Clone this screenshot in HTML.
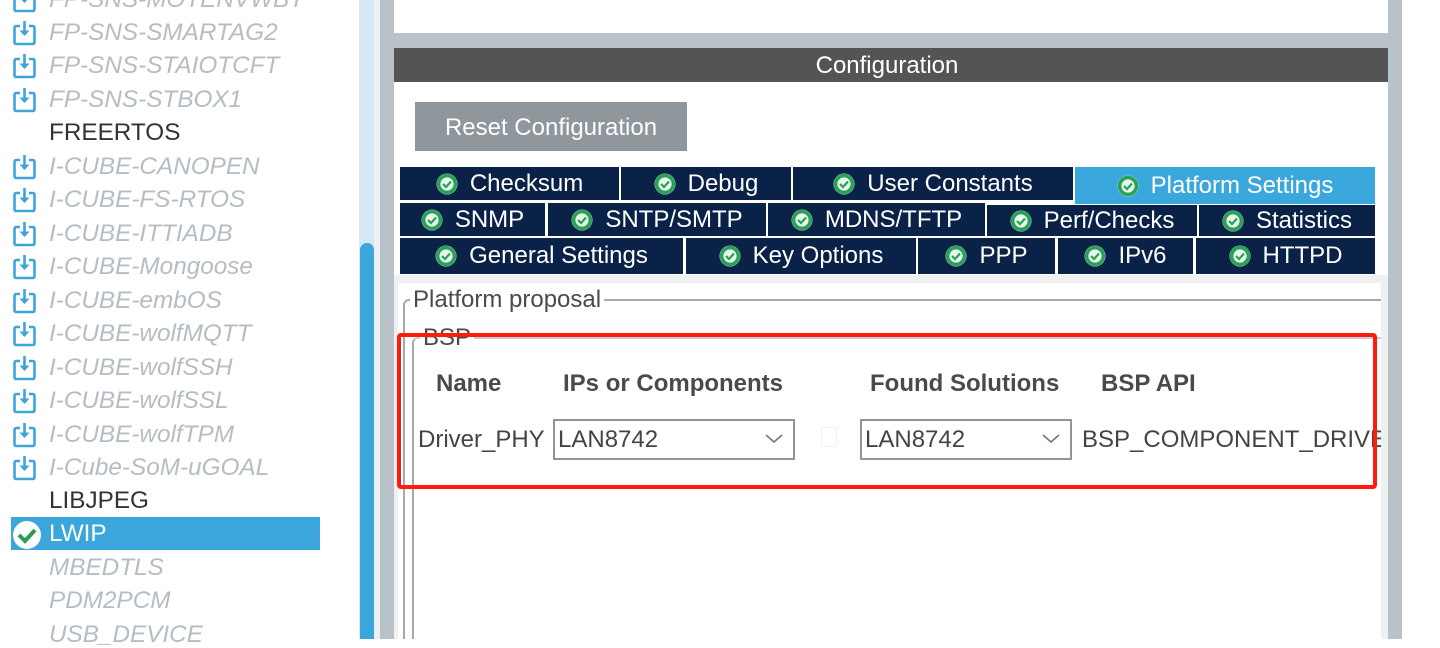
<!DOCTYPE html>
<html><head><meta charset="utf-8"><style>
*{margin:0;padding:0;box-sizing:border-box}
body{width:1440px;height:639px;overflow:hidden;background:#fff;position:relative;font-family:"Liberation Sans",Arial,sans-serif}
.a{position:absolute}
.it{position:absolute;left:49px;font-size:24.3px;font-style:italic;color:#b5bdc4;line-height:26px;white-space:nowrap}
.it.n{font-style:normal;color:#333}
.ic{position:absolute;left:12px;width:25px;height:26px}
.tab{position:absolute;background:#0b2248;color:#fff;font-size:24px;display:flex;align-items:center;justify-content:center;white-space:nowrap}
.tab svg{margin-right:12px;flex:none}
.sel{background:#3aa8dc}
.h{position:absolute;top:370px;font-size:24px;font-weight:bold;color:#4a4a4a;white-space:nowrap}
</style></head><body>
<svg width="0" height="0" style="position:absolute"><defs>
<symbol id="dl" viewBox="0 0 25 26"><path d="M8 6H4.5Q2.5 6 2.5 8V22Q2.5 24 4.5 24H20.5Q22.5 24 22.5 22V8Q22.5 6 20.5 6H17" fill="none" stroke="#3fa4dc" stroke-width="2.6"/><path d="M12.5 1V15" stroke="#3fa4dc" stroke-width="2.6"/><path d="M7.5 10.5L12.5 16L17.5 10.5Z" fill="#3fa4dc"/></symbol>
<symbol id="ck" viewBox="0 0 22 22"><circle cx="11" cy="11" r="10.5" fill="#e8f6ec"/><circle cx="11" cy="11" r="8.4" fill="none" stroke="#27a257" stroke-width="3.6"/><path d="M7 11l3 3 5-5.5" fill="none" stroke="#27a257" stroke-width="2.2"/></symbol>
</defs></svg>

<svg class="ic" style="top:-13px"><use href="#dl"/></svg><div class="it" style="top:-13px">FP-SNS-MOTENVWBT</div>
<svg class="ic" style="top:20px"><use href="#dl"/></svg><div class="it" style="top:20px">FP-SNS-SMARTAG2</div>
<svg class="ic" style="top:53px"><use href="#dl"/></svg><div class="it" style="top:53px">FP-SNS-STAIOTCFT</div>
<svg class="ic" style="top:87px"><use href="#dl"/></svg><div class="it" style="top:87px">FP-SNS-STBOX1</div>
<div class="it n" style="top:120px">FREERTOS</div>
<svg class="ic" style="top:154px"><use href="#dl"/></svg><div class="it" style="top:154px">I-CUBE-CANOPEN</div>
<svg class="ic" style="top:187px"><use href="#dl"/></svg><div class="it" style="top:187px">I-CUBE-FS-RTOS</div>
<svg class="ic" style="top:221px"><use href="#dl"/></svg><div class="it" style="top:221px">I-CUBE-ITTIADB</div>
<svg class="ic" style="top:254px"><use href="#dl"/></svg><div class="it" style="top:254px">I-CUBE-Mongoose</div>
<svg class="ic" style="top:288px"><use href="#dl"/></svg><div class="it" style="top:288px">I-CUBE-embOS</div>
<svg class="ic" style="top:321px"><use href="#dl"/></svg><div class="it" style="top:321px">I-CUBE-wolfMQTT</div>
<svg class="ic" style="top:355px"><use href="#dl"/></svg><div class="it" style="top:355px">I-CUBE-wolfSSH</div>
<svg class="ic" style="top:388px"><use href="#dl"/></svg><div class="it" style="top:388px">I-CUBE-wolfSSL</div>
<svg class="ic" style="top:422px"><use href="#dl"/></svg><div class="it" style="top:422px">I-CUBE-wolfTPM</div>
<svg class="ic" style="top:455px"><use href="#dl"/></svg><div class="it" style="top:455px">I-Cube-SoM-uGOAL</div>
<div class="it n" style="top:488px">LIBJPEG</div>
<div class="a" style="left:11px;top:517px;width:309px;height:33px;background:#3aa6db"></div>
<svg class="a" style="left:12px;top:520px" width="30" height="30" viewBox="0 0 30 30"><circle cx="15" cy="15" r="14" fill="#fff"/><path d="M7 15l6 6 10-11" fill="none" stroke="#2a9e55" stroke-width="4"/></svg>
<div class="it n" style="top:521px;color:#fff">LWIP</div>
<div class="it" style="top:555px">MBEDTLS</div>
<div class="it" style="top:588px">PDM2PCM</div>
<div class="it" style="top:622px">USB_DEVICE</div>

<div class="a" style="left:359px;top:0;width:15px;height:639px;background:#d6e8f6"></div>
<div class="a" style="left:360px;top:243px;width:14px;height:396px;background:#3aa6db;border-radius:7px 7px 0 0"></div>
<div class="a" style="left:374px;top:0;width:6px;height:639px;background:#eef1f3"></div>
<div class="a" style="left:380px;top:0;width:14px;height:639px;background:#b8c2c8"></div>
<div class="a" style="left:394px;top:33px;width:994px;height:15px;background:#b8c2c8"></div>
<div class="a" style="left:1388px;top:0;width:14px;height:639px;background:#b8c2c8"></div>
<div class="a" style="left:394px;top:48px;width:994px;height:34px;background:#535453;color:#fff;font-size:24px;text-align:center;line-height:36px;padding-right:8px">Configuration</div>

<div class="a" style="left:415px;top:102px;width:272px;height:49px;background:#8f969c;color:#fff;font-size:24px;text-align:center;line-height:51px">Reset Configuration</div>

<div class="tab" style="left:400px;top:167px;width:219px;height:33px"><svg width="22" height="22"><use href="#ck"/></svg>Checksum</div>
<div class="tab" style="left:621px;top:167px;width:170px;height:33px"><svg width="22" height="22"><use href="#ck"/></svg>Debug</div>
<div class="tab" style="left:793px;top:167px;width:280px;height:33px"><svg width="22" height="22"><use href="#ck"/></svg>User Constants</div>
<div class="tab sel" style="left:1075px;top:167px;width:300px;height:37px"><svg width="22" height="22"><use href="#ck"/></svg>Platform Settings</div>
<div class="tab" style="left:400px;top:203px;width:145px;height:33px"><svg width="22" height="22"><use href="#ck"/></svg>SNMP</div>
<div class="tab" style="left:548px;top:203px;width:218px;height:33px"><svg width="22" height="22"><use href="#ck"/></svg>SNTP/SMTP</div>
<div class="tab" style="left:768px;top:203px;width:217px;height:33px"><svg width="22" height="22"><use href="#ck"/></svg>MDNS/TFTP</div>
<div class="tab" style="left:987px;top:205px;width:210px;height:31px"><svg width="22" height="22"><use href="#ck"/></svg>Perf/Checks</div>
<div class="tab" style="left:1199px;top:205px;width:176px;height:31px"><svg width="22" height="22"><use href="#ck"/></svg>Statistics</div>
<div class="tab" style="left:400px;top:238px;width:283px;height:36px"><svg width="22" height="22"><use href="#ck"/></svg>General Settings</div>
<div class="tab" style="left:686px;top:238px;width:230px;height:36px"><svg width="22" height="22"><use href="#ck"/></svg>Key Options</div>
<div class="tab" style="left:918px;top:238px;width:137px;height:36px"><svg width="22" height="22"><use href="#ck"/></svg>PPP</div>
<div class="tab" style="left:1058px;top:238px;width:135px;height:36px"><svg width="22" height="22"><use href="#ck"/></svg>IPv6</div>
<div class="tab" style="left:1196px;top:238px;width:179px;height:36px"><svg width="22" height="22"><use href="#ck"/></svg>HTTPD</div>

<div class="a" style="left:394px;top:275px;width:994px;height:364px;background:#eef0f2"></div>
<div class="a" style="left:398px;top:283px;width:983px;height:356px;background:#fff"></div>
<div class="a" style="left:403px;top:299px;width:978px;height:340px;border-top:2px solid #a5a9ad;border-left:2px solid #a5a9ad;border-top-left-radius:6px"></div>
<div class="a" style="left:410px;top:285px;background:#fff;padding:0 3px;font-size:24px;color:#4a4a4a;line-height:30px">Platform proposal</div>
<div class="a" style="left:412px;top:337px;width:969px;height:302px;border-top:2px solid #c8ccd0;border-left:2px solid #a5a9ad;border-top-left-radius:6px"></div>
<div class="a" style="left:420px;top:323px;background:#fff;padding:0 3px;font-size:24px;color:#4a4a4a;line-height:30px">BSP</div>

<div class="h" style="left:436px">Name</div>
<div class="h" style="left:563px">IPs or Components</div>
<div class="h" style="left:870px">Found Solutions</div>
<div class="h" style="left:1101px">BSP API</div>
<div class="a" style="left:418px;top:426px;font-size:24px;color:#444">Driver_PHY</div>
<div class="a" style="left:553px;top:419px;width:242px;height:41px;border:2px solid #8e969c;font-size:24px;color:#444;padding:5px 0 0 3px">LAN8742</div>
<svg class="a" style="left:764px;top:432px" width="20" height="14"><path d="M2 3l8 7 8-7" fill="none" stroke="#777" stroke-width="1.6"/></svg>
<div class="a" style="left:821px;top:427px;width:16px;height:20px;border:1px solid #f0f0f0"></div>
<div class="a" style="left:860px;top:419px;width:212px;height:41px;border:2px solid #8e969c;font-size:24px;color:#444;padding:5px 0 0 3px">LAN8742</div>
<svg class="a" style="left:1041px;top:432px" width="20" height="14"><path d="M2 3l8 7 8-7" fill="none" stroke="#777" stroke-width="1.6"/></svg>
<div class="a" style="left:1082px;top:426px;width:299px;overflow:hidden;font-size:24px;color:#444;white-space:nowrap">BSP_COMPONENT_DRIVER</div>

<div class="a" style="left:397px;top:333px;width:980px;height:156px;border:4.5px solid #ff1b0e;border-radius:4px"></div>
</body></html>
